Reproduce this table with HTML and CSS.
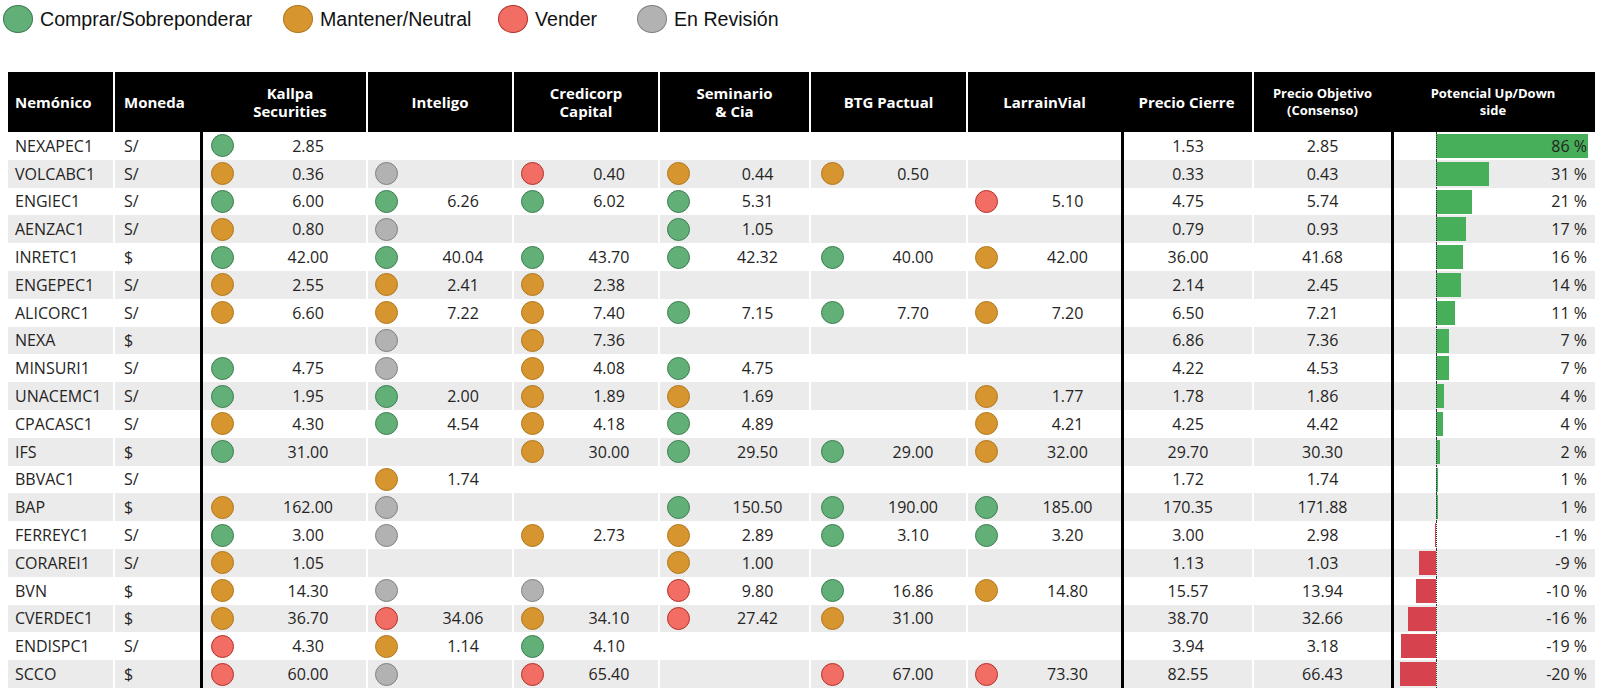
FILE: index.html
```html
<!DOCTYPE html>
<html lang="es">
<head>
<meta charset="utf-8">
<title>Recomendaciones</title>
<link rel="stylesheet" href="styles.css">
</head>
<body>
<div class="legend">
  <div class="legend-item"><span class="dot lg green"></span><span>Comprar/Sobreponderar</span></div>
  <div class="legend-item"><span class="dot lg orange"></span><span>Mantener/Neutral</span></div>
  <div class="legend-item"><span class="dot lg red"></span><span>Vender</span></div>
  <div class="legend-item"><span class="dot lg gray"></span><span>En Revisión</span></div>
</div>

<div class="table">
  <div class="row head">
    <div class="c nem">Nemónico</div>
    <div class="c mon gap">Moneda</div>
    <div class="c kal">Kallpa<br>Securities</div>
    <div class="c gap">Inteligo</div>
    <div class="c gap">Credicorp<br>Capital</div>
    <div class="c gap">Seminario<br>&amp; Cia</div>
    <div class="c gap">BTG Pactual</div>
    <div class="c gap">LarrainVial</div>
    <div class="c">Precio Cierre</div>
    <div class="c gap small">Precio Objetivo<br>(Consenso)</div>
    <div class="c small">Potencial Up/Down<br>side</div>
  </div>

  <div class="row"><div class="c nem">NEXAPEC1</div><div class="c mon gap">S/</div><div class="c r thick"><span class="dot green"></span><span class="v">2.85</span></div><div class="c r gap"></div><div class="c r gap"></div><div class="c r gap"></div><div class="c r gap btg"></div><div class="c r gap"></div><div class="c p thick">1.53</div><div class="c p gap">2.85</div><div class="c pot thick"><span class="bar pos" style="width:152px"></span><span class="pct">86 %</span></div></div>

  <div class="row alt"><div class="c nem">VOLCABC1</div><div class="c mon gap">S/</div><div class="c r thick"><span class="dot orange"></span><span class="v">0.36</span></div><div class="c r gap"><span class="dot gray"></span></div><div class="c r gap"><span class="dot red"></span><span class="v">0.40</span></div><div class="c r gap"><span class="dot orange"></span><span class="v">0.44</span></div><div class="c r gap btg"><span class="dot orange"></span><span class="v">0.50</span></div><div class="c r gap"></div><div class="c p thick">0.33</div><div class="c p gap">0.43</div><div class="c pot thick"><span class="bar pos" style="width:53px"></span><span class="pct">31 %</span></div></div>

  <div class="row"><div class="c nem">ENGIEC1</div><div class="c mon gap">S/</div><div class="c r thick"><span class="dot green"></span><span class="v">6.00</span></div><div class="c r gap"><span class="dot green"></span><span class="v">6.26</span></div><div class="c r gap"><span class="dot green"></span><span class="v">6.02</span></div><div class="c r gap"><span class="dot green"></span><span class="v">5.31</span></div><div class="c r gap btg"></div><div class="c r gap"><span class="dot red"></span><span class="v">5.10</span></div><div class="c p thick">4.75</div><div class="c p gap">5.74</div><div class="c pot thick"><span class="bar pos" style="width:36px"></span><span class="pct">21 %</span></div></div>

  <div class="row alt"><div class="c nem">AENZAC1</div><div class="c mon gap">S/</div><div class="c r thick"><span class="dot orange"></span><span class="v">0.80</span></div><div class="c r gap"><span class="dot gray"></span></div><div class="c r gap"></div><div class="c r gap"><span class="dot green"></span><span class="v">1.05</span></div><div class="c r gap btg"></div><div class="c r gap"></div><div class="c p thick">0.79</div><div class="c p gap">0.93</div><div class="c pot thick"><span class="bar pos" style="width:30px"></span><span class="pct">17 %</span></div></div>

  <div class="row"><div class="c nem">INRETC1</div><div class="c mon gap">$</div><div class="c r thick"><span class="dot green"></span><span class="v">42.00</span></div><div class="c r gap"><span class="dot green"></span><span class="v">40.04</span></div><div class="c r gap"><span class="dot green"></span><span class="v">43.70</span></div><div class="c r gap"><span class="dot green"></span><span class="v">42.32</span></div><div class="c r gap btg"><span class="dot green"></span><span class="v">40.00</span></div><div class="c r gap"><span class="dot orange"></span><span class="v">42.00</span></div><div class="c p thick">36.00</div><div class="c p gap">41.68</div><div class="c pot thick"><span class="bar pos" style="width:27px"></span><span class="pct">16 %</span></div></div>

  <div class="row alt"><div class="c nem">ENGEPEC1</div><div class="c mon gap">S/</div><div class="c r thick"><span class="dot orange"></span><span class="v">2.55</span></div><div class="c r gap"><span class="dot orange"></span><span class="v">2.41</span></div><div class="c r gap"><span class="dot orange"></span><span class="v">2.38</span></div><div class="c r gap"></div><div class="c r gap btg"></div><div class="c r gap"></div><div class="c p thick">2.14</div><div class="c p gap">2.45</div><div class="c pot thick"><span class="bar pos" style="width:25px"></span><span class="pct">14 %</span></div></div>

  <div class="row"><div class="c nem">ALICORC1</div><div class="c mon gap">S/</div><div class="c r thick"><span class="dot orange"></span><span class="v">6.60</span></div><div class="c r gap"><span class="dot orange"></span><span class="v">7.22</span></div><div class="c r gap"><span class="dot orange"></span><span class="v">7.40</span></div><div class="c r gap"><span class="dot green"></span><span class="v">7.15</span></div><div class="c r gap btg"><span class="dot green"></span><span class="v">7.70</span></div><div class="c r gap"><span class="dot orange"></span><span class="v">7.20</span></div><div class="c p thick">6.50</div><div class="c p gap">7.21</div><div class="c pot thick"><span class="bar pos" style="width:19px"></span><span class="pct">11 %</span></div></div>

  <div class="row alt"><div class="c nem">NEXA</div><div class="c mon gap">$</div><div class="c r thick"></div><div class="c r gap"><span class="dot gray"></span></div><div class="c r gap"><span class="dot orange"></span><span class="v">7.36</span></div><div class="c r gap"></div><div class="c r gap btg"></div><div class="c r gap"></div><div class="c p thick">6.86</div><div class="c p gap">7.36</div><div class="c pot thick"><span class="bar pos" style="width:13px"></span><span class="pct">7 %</span></div></div>

  <div class="row"><div class="c nem">MINSURI1</div><div class="c mon gap">S/</div><div class="c r thick"><span class="dot green"></span><span class="v">4.75</span></div><div class="c r gap"><span class="dot gray"></span></div><div class="c r gap"><span class="dot orange"></span><span class="v">4.08</span></div><div class="c r gap"><span class="dot green"></span><span class="v">4.75</span></div><div class="c r gap btg"></div><div class="c r gap"></div><div class="c p thick">4.22</div><div class="c p gap">4.53</div><div class="c pot thick"><span class="bar pos" style="width:13px"></span><span class="pct">7 %</span></div></div>

  <div class="row alt"><div class="c nem">UNACEMC1</div><div class="c mon gap">S/</div><div class="c r thick"><span class="dot green"></span><span class="v">1.95</span></div><div class="c r gap"><span class="dot green"></span><span class="v">2.00</span></div><div class="c r gap"><span class="dot orange"></span><span class="v">1.89</span></div><div class="c r gap"><span class="dot orange"></span><span class="v">1.69</span></div><div class="c r gap btg"></div><div class="c r gap"><span class="dot orange"></span><span class="v">1.77</span></div><div class="c p thick">1.78</div><div class="c p gap">1.86</div><div class="c pot thick"><span class="bar pos" style="width:8px"></span><span class="pct">4 %</span></div></div>

  <div class="row"><div class="c nem">CPACASC1</div><div class="c mon gap">S/</div><div class="c r thick"><span class="dot orange"></span><span class="v">4.30</span></div><div class="c r gap"><span class="dot green"></span><span class="v">4.54</span></div><div class="c r gap"><span class="dot orange"></span><span class="v">4.18</span></div><div class="c r gap"><span class="dot green"></span><span class="v">4.89</span></div><div class="c r gap btg"></div><div class="c r gap"><span class="dot orange"></span><span class="v">4.21</span></div><div class="c p thick">4.25</div><div class="c p gap">4.42</div><div class="c pot thick"><span class="bar pos" style="width:7px"></span><span class="pct">4 %</span></div></div>

  <div class="row alt"><div class="c nem">IFS</div><div class="c mon gap">$</div><div class="c r thick"><span class="dot green"></span><span class="v">31.00</span></div><div class="c r gap"></div><div class="c r gap"><span class="dot orange"></span><span class="v">30.00</span></div><div class="c r gap"><span class="dot green"></span><span class="v">29.50</span></div><div class="c r gap btg"><span class="dot green"></span><span class="v">29.00</span></div><div class="c r gap"><span class="dot orange"></span><span class="v">32.00</span></div><div class="c p thick">29.70</div><div class="c p gap">30.30</div><div class="c pot thick"><span class="bar pos" style="width:3.5px"></span><span class="pct">2 %</span></div></div>

  <div class="row"><div class="c nem">BBVAC1</div><div class="c mon gap">S/</div><div class="c r thick"></div><div class="c r gap"><span class="dot orange"></span><span class="v">1.74</span></div><div class="c r gap"></div><div class="c r gap"></div><div class="c r gap btg"></div><div class="c r gap"></div><div class="c p thick">1.72</div><div class="c p gap">1.74</div><div class="c pot thick"><span class="bar pos" style="width:2px"></span><span class="pct">1 %</span></div></div>

  <div class="row alt"><div class="c nem">BAP</div><div class="c mon gap">$</div><div class="c r thick"><span class="dot orange"></span><span class="v">162.00</span></div><div class="c r gap"><span class="dot gray"></span></div><div class="c r gap"></div><div class="c r gap"><span class="dot green"></span><span class="v">150.50</span></div><div class="c r gap btg"><span class="dot green"></span><span class="v">190.00</span></div><div class="c r gap"><span class="dot green"></span><span class="v">185.00</span></div><div class="c p thick">170.35</div><div class="c p gap">171.88</div><div class="c pot thick"><span class="bar pos" style="width:1.5px"></span><span class="pct">1 %</span></div></div>

  <div class="row"><div class="c nem">FERREYC1</div><div class="c mon gap">S/</div><div class="c r thick"><span class="dot green"></span><span class="v">3.00</span></div><div class="c r gap"><span class="dot gray"></span></div><div class="c r gap"><span class="dot orange"></span><span class="v">2.73</span></div><div class="c r gap"><span class="dot orange"></span><span class="v">2.89</span></div><div class="c r gap btg"><span class="dot green"></span><span class="v">3.10</span></div><div class="c r gap"><span class="dot green"></span><span class="v">3.20</span></div><div class="c p thick">3.00</div><div class="c p gap">2.98</div><div class="c pot thick"><span class="bar neg" style="width:1.5px"></span><span class="pct">-1 %</span></div></div>

  <div class="row alt"><div class="c nem">CORAREI1</div><div class="c mon gap">S/</div><div class="c r thick"><span class="dot orange"></span><span class="v">1.05</span></div><div class="c r gap"></div><div class="c r gap"></div><div class="c r gap"><span class="dot orange"></span><span class="v">1.00</span></div><div class="c r gap btg"></div><div class="c r gap"></div><div class="c p thick">1.13</div><div class="c p gap">1.03</div><div class="c pot thick"><span class="bar neg" style="width:17px"></span><span class="pct">-9 %</span></div></div>

  <div class="row"><div class="c nem">BVN</div><div class="c mon gap">$</div><div class="c r thick"><span class="dot orange"></span><span class="v">14.30</span></div><div class="c r gap"><span class="dot gray"></span></div><div class="c r gap"><span class="dot gray"></span></div><div class="c r gap"><span class="dot red"></span><span class="v">9.80</span></div><div class="c r gap btg"><span class="dot green"></span><span class="v">16.86</span></div><div class="c r gap"><span class="dot orange"></span><span class="v">14.80</span></div><div class="c p thick">15.57</div><div class="c p gap">13.94</div><div class="c pot thick"><span class="bar neg" style="width:20px"></span><span class="pct">-10 %</span></div></div>

  <div class="row alt"><div class="c nem">CVERDEC1</div><div class="c mon gap">$</div><div class="c r thick"><span class="dot orange"></span><span class="v">36.70</span></div><div class="c r gap"><span class="dot red"></span><span class="v">34.06</span></div><div class="c r gap"><span class="dot orange"></span><span class="v">34.10</span></div><div class="c r gap"><span class="dot red"></span><span class="v">27.42</span></div><div class="c r gap btg"><span class="dot orange"></span><span class="v">31.00</span></div><div class="c r gap"></div><div class="c p thick">38.70</div><div class="c p gap">32.66</div><div class="c pot thick"><span class="bar neg" style="width:28px"></span><span class="pct">-16 %</span></div></div>

  <div class="row"><div class="c nem">ENDISPC1</div><div class="c mon gap">S/</div><div class="c r thick"><span class="dot red"></span><span class="v">4.30</span></div><div class="c r gap"><span class="dot orange"></span><span class="v">1.14</span></div><div class="c r gap"><span class="dot green"></span><span class="v">4.10</span></div><div class="c r gap"></div><div class="c r gap btg"></div><div class="c r gap"></div><div class="c p thick">3.94</div><div class="c p gap">3.18</div><div class="c pot thick"><span class="bar neg" style="width:35px"></span><span class="pct">-19 %</span></div></div>

  <div class="row alt"><div class="c nem">SCCO</div><div class="c mon gap">$</div><div class="c r thick"><span class="dot red"></span><span class="v">60.00</span></div><div class="c r gap"><span class="dot gray"></span></div><div class="c r gap"><span class="dot red"></span><span class="v">65.40</span></div><div class="c r gap"></div><div class="c r gap btg"><span class="dot red"></span><span class="v">67.00</span></div><div class="c r gap"><span class="dot red"></span><span class="v">73.30</span></div><div class="c p thick">82.55</div><div class="c p gap">66.43</div><div class="c pot thick"><span class="bar neg" style="width:36px"></span><span class="pct">-20 %</span></div></div>
</div>
</body>
</html>
```

FILE: styles.css
```css
* { box-sizing: border-box; }

body {
  margin: 0;
  background: #ffffff;
  font-family: "Open Sans", "Noto Sans", sans-serif;
  color: #252423;
}

/* legend */
.legend {
  display: grid;
  grid-template-columns: 280px 215px 139px auto;
  align-items: center;
  height: 38px;
  padding-left: 3px;
  font-family: "Liberation Sans", Arial, sans-serif;
  font-size: 19.6px;
  color: #111111;
}
.legend-item {
  display: flex;
  align-items: center;
  gap: 7px;
}

.dot {
  display: inline-block;
  flex: none;
  width: 23px;
  height: 23px;
  border-radius: 50%;
  border: 1.5px solid;
}
.dot.lg { width: 30px; height: 28px; border-width: 1.5px; }
.green  { background: #62b078; border-color: #3c7d50; }
.orange { background: #d6952e; border-color: #b0781e; }
.red    { background: #f26e64; border-color: #b3302a; }
.gray   { background: #b2b2b2; border-color: #808080; }

/* table */
.table {
  margin-top: 34px;
  margin-left: 8px;
  width: 1587px;
}
.row {
  display: grid;
  grid-template-columns: 105px 87px 166px 146px 146px 151px 157px 155px 131px 139px 204px;
  height: 27.8px;
  font-size: 16px;
}
.row.alt .c { background-color: #ebebeb; }

.c {
  display: flex;
  align-items: center;
  background-clip: padding-box;
  white-space: nowrap;
  min-width: 0;
}
.gap { border-left: 2px solid #ffffff; }
.thick { border-left: 3px solid #000000; }

.nem { padding-left: 7px; }
.mon { padding-left: 9px; }

.r { padding-left: 8px; }
.r.gap { padding-left: 7px; }
.r.btg { padding-left: 10px; }
.v {
  flex: 1;
  margin-left: 16px;
  text-align: center;
}

.p { justify-content: center; }

.pot {
  position: relative;
  justify-content: flex-end;
  padding-right: 8px;
}
.pot::before {
  content: "";
  position: absolute;
  left: 42px;
  top: 0;
  bottom: 0;
  border-left: 1px dotted #333333;
  z-index: 2;
}
.bar {
  position: absolute;
  top: 2px;
  height: 24px;
}
.bar.pos { left: 42px; background: #47ae5a; }
.bar.neg { right: calc(100% - 42px); background: #d6434f; }
.pct { position: relative; z-index: 1; }

/* header */
.row.head {
  height: 60px;
  font-size: 15px;
  font-weight: 700;
  line-height: 18px;
  color: #ffffff;
}
.head .c {
  background: #000000;
  justify-content: center;
  text-align: center;
}
.head .nem, .head .mon { justify-content: flex-start; text-align: left; }
.head .kal { padding-left: 14px; }
.head .small { font-size: 13px; line-height: 17px; }
```
